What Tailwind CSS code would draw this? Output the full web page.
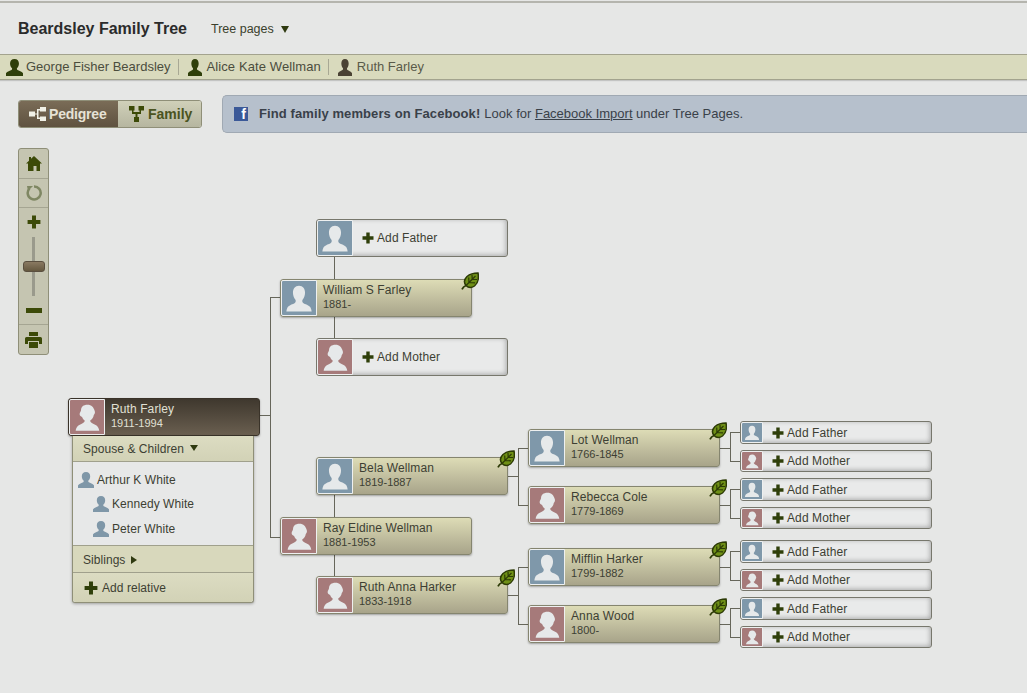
<!DOCTYPE html>
<html lang="en">
<head>
  <meta charset="UTF-8" />
  <title>Beardsley Family Tree</title>
  <script src="https://cdn.jsdelivr.net/npm/@tailwindcss/browser@4"></script>
</head>
<body class="bg-[#e6e7e6] text-[#333] font-['Liberation_Sans',Arial,sans-serif] w-[1027px] h-[693px] overflow-hidden relative">

  <svg class="hidden">
    <symbol id="person" viewBox="0 0 36 36">
      <path d="M18 5c-4.200 0-6.400 3.100-6.400 7.300 0 3 1 5.700 2.600 7.500.6 1 .4 2.700-.6 3.400-1.800 1.300-6.400 2.300-7.800 4.800-.7 1.400-1 2.800-1.200 4.200h26.800c-.2-1.400-.5-2.800-1.200-4.200-1.400-2.500-6-3.500-7.800-4.800-1-.7-1.200-2.400-.6-3.400 1.600-1.800 2.600-4.500 2.600-7.500C24.400 8.100 22.200 5 18 5z" />
    </symbol>
    <symbol id="bust" viewBox="5 4 26 29" preserveAspectRatio="none">
      <path d="M18 4c-4.500 0-6.800 3.300-6.800 7.500 0 3.200 1 6 2.800 8 .6 1 .4 2.500-.6 3.300-1.800 1.300-6.900 2.600-8.200 5.200-.8 1.500-1 3-1.200 5h28c-.2-2-.4-3.500-1.200-5-1.300-2.600-6.400-3.900-8.200-5.200-1-.8-1.200-2.300-.6-3.300 1.800-2 2.800-4.800 2.800-8C24.800 7.300 22.500 4 18 4z" />
    </symbol>
    <symbol id="woman" viewBox="0 0 36 36">
      <path d="M18.500 5c-4.400 0-6.800 2.400-6.800 5.500 0 1.500-1.500 2.800-1.500 4.500 0 1.500 1.400 2.200 2.600 3 .7 1.900 1.800 3 2.800 3.700 0 1.800-1.600 2.700-3.600 3.600-3 1.100-5.500 2.900-6 7.200h25c-.5-4.300-3-6.100-6-7.200-2-.9-3.600-1.800-3.600-3.600 2-1.300 3.400-3.300 3.800-5.900 1.200-1 1.600-2.500.9-4.300C25 7.600 22.900 5 18.500 5z" />
    </symbol>
    <symbol id="plus" viewBox="0 0 12 12">
      <path d="M4.300 .5h3.400v3.800h3.800v3.400H7.700v3.800H4.300V7.700H.5V4.300h3.800z" />
    </symbol>
    <symbol id="leaf" viewBox="0 0 18 18">
      <path fill="#6f9016" stroke="#2c3a05" stroke-width="1.500" d="M17 1C18 6 17 11 13.500 14 10.500 16 7 15.500 5 13.500 3 11 3 7.500 6 4.500 9 2 13 1 17 1z" />
      <path fill="none" stroke="#2c3a05" stroke-width="1.800" d="M1 17.300c.8-1.800 2.400-3.200 4-3.800" />
      <path fill="none" stroke="#2c3a05" stroke-width="1.200" d="M5 13.500 14.500 4M8 10.500 7.700 5.500M8 10.500l6 .3M11.200 7.300 11 3M11.200 7.300l4.800 .2" />
    </symbol>
  </svg>

  <div class="h-[2px] mt-[1px] mb-[1px] bg-[#b5b5ae]"></div>

  <!-- Title row -->
  <div class="flex items-center h-[50px] pl-[18px]">
    <h1 class="text-[16px] font-bold text-[#2b2b2b]">Beardsley Family Tree</h1>
    <button class="ml-[24px] text-[12.500px] text-[#3a3f2c] flex items-center gap-[7px] mt-[1px]">
      Tree pages
      <span class="w-0 h-0 border-x-[4px] border-x-transparent border-t-[7px] border-t-[#2f3a10]"></span>
    </button>
  </div>

  <!-- Breadcrumb -->
  <div class="h-[26px] bg-[#d9dabd] border-y border-[#a3a38e] flex items-center pl-[6px] text-[13px] text-[#4b4d3d] shadow-[0_1px_1px_rgba(0,0,0,0.15)]">
    <svg class="w-[17px] h-[17px] fill-[#2f3f0a] mr-[3px]"><use href="#bust" /></svg>
    <span>George Fisher Beardsley</span>
    <span class="w-px h-[16px] bg-[#a8a894] ml-[7px] mr-[9px]"></span>
    <svg class="w-[14px] h-[17px] fill-[#2f3f0a] mr-[5px]"><use href="#bust" /></svg>
    <span class="tracking-[0.1px]">Alice Kate Wellman</span>
    <span class="w-px h-[16px] bg-[#a8a894] ml-[7px] mr-[9px]"></span>
    <svg class="w-[14px] h-[17px] fill-[#4a4234] mr-[5px]"><use href="#bust" /></svg>
    <span class="text-[#5a5a4a]">Ruth Farley</span>
  </div>

  <!-- Toolbar -->
  <div class="flex items-start pl-[18px] mt-[15px]">
    <div class="flex h-[28px] mt-[5px] w-[184px] rounded-[3px] border border-[#8f8f78] overflow-hidden text-[14px] font-bold">
      <div class="w-[99px] flex items-center pl-[10px] gap-[2px] text-[#e6e2d6] bg-gradient-to-b from-[#7a6c57] to-[#5f5240]">
        <svg class="w-[18px] h-[14px] fill-[#f0f0e6]" viewBox="0 0 18 14"><path d="M0 4.500h6v5H0zM6 6.500h2V2h3v1.500H9.500v7H11V12H8V7.500H6zM11 0h6v4.500h-6zM11 9.500h6V14h-6z" /></svg>
        <span class="tracking-[-0.2px]">Pedigree</span>
      </div>
      <div class="flex-1 flex items-center pl-[11px] gap-[4px] text-[#4a5320] bg-gradient-to-b from-[#d0d0b9] to-[#b6b6a0]">
        <svg class="w-[15px] h-[16px] fill-[#3c4a08]" viewBox="0 0 15 16"><path d="M0 0h5.500v4.500H4.500V6H10.500V4.500H9.500V0H15v4.500h-3V8H8.500v3H10v5H5v-5h1.500V8H3V4.500H0z" /></svg>
        <span>Family</span>
      </div>
    </div>
    <div class="ml-[20px] w-[805px] h-[38px] rounded-l-[5px] bg-[#b6c0cc] border border-r-0 border-[#a0a9b3] flex items-center pl-[11px] text-[13px] text-[#3a4149]">
      <span class="w-[14px] h-[14px] bg-[#3b5998] text-white mr-[11px] shrink-0 flex justify-end pr-[2px] font-bold text-[14px] leading-[15px]">f</span>
      <b class="tracking-[0.1px] mr-[4px]">Find family members on Facebook!</b>
      Look for&nbsp;<u>Facebook Import</u>&nbsp;under Tree Pages.
    </div>
  </div>

  <!-- Zoom control -->
  <div class="absolute left-[18px] top-[148px] w-[31px] h-[207px] rounded-[3px] border border-[#8f8f78] bg-[#c5c5b1] flex flex-col items-center">
    <div class="h-[30px] w-full border-b border-[#a5a592] flex items-center justify-center">
      <svg class="w-[16px] h-[15px] fill-[#3c4a08]" viewBox="0 0 16 15"><path d="M8 0l8 7.500h-2V15h-3.500v-5h-3v5H2V7.500H0l3-2.800V1h2v1.800z" /></svg>
    </div>
    <div class="h-[29px] w-full border-b border-[#a5a592] flex items-center justify-center">
      <svg class="w-[16px] h-[16px] fill-none stroke-[#7f8763] stroke-[2.500]" viewBox="0 0 16 16"><path d="M3.500 3.500A6.500 6.500 0 1 0 8 1.500" /><path class="fill-[#7f8763] stroke-none" d="M1 1l6 0-5 5z" /></svg>
    </div>
    <div class="flex-1 w-full relative flex flex-col items-center pt-[7px]">
      <svg class="w-[14px] h-[14px] fill-[#3c4a08]"><use href="#plus" /></svg>
      <div class="w-[3px] h-[59px] bg-[#9a9a8c] mt-[8px]"></div>
      <div class="absolute left-[4px] top-[53px] w-[22px] h-[11px] rounded-[3px] border border-[#5a4f3f] bg-gradient-to-b from-[#8a7a62] to-[#65583f]"></div>
      <div class="w-[16px] h-[5px] bg-[#3c4a08] mt-[12px]"></div>
    </div>
    <div class="h-[30px] w-full border-t border-[#a5a592] flex items-center justify-center">
      <svg class="w-[17px] h-[16px] fill-[#3c4a08]" viewBox="0 0 17 16"><path d="M4 0h9v4H4zM1.500 5h14A1.500 1.500 0 0 1 17 6.500V12h-3V9H3v3H0V6.500A1.500 1.500 0 0 1 1.500 5zM4 10h9v6H4z" /></svg>
    </div>
  </div>

  <!-- Connectors -->
  <svg class="absolute left-0 top-0 w-[1027px] h-[693px]" fill="none" stroke="#66665a" stroke-width="1" shape-rendering="crispEdges">
    <path id="lines" d="M334.500 257V338M334.500 495V576M260 415.500H270.500M280 297.500H270.500V537.500H280" />
  </svg>

  <!-- Tree nodes -->
  <div id="tree"></div>

  <!-- Relatives panel under the root person -->
  <div class="absolute left-[72px] top-[436px] w-[182px] h-[167px] border border-t-0 border-[#8f8f78] rounded-b-[3px] bg-[#e7e8e8] text-[12px] tracking-[0.05px] text-[#3d3f33] shadow-[0_1px_3px_rgba(0,0,0,0.3)]">
    <div class="h-[26px] bg-gradient-to-b from-[#dcdcc2] to-[#d2d2b6] border-b border-[#a0a08c] flex items-center pl-[10px] gap-[6px]">
      Spouse &amp; Children
      <span class="w-0 h-0 border-x-[4px] border-x-transparent border-t-[6px] border-t-[#2f3a10] mb-[2px]"></span>
    </div>
    <div class="h-[83px] pt-[5px]">
      <div class="h-[25px] flex items-center pl-[5px]">
        <svg class="w-[16px] h-[16px] fill-[#7f97a8] mr-[3px]"><use href="#bust" /></svg>Arthur K White
      </div>
      <div class="h-[24px] flex items-center pl-[20px]">
        <svg class="w-[16px] h-[16px] fill-[#7f97a8] mr-[3px]"><use href="#bust" /></svg>Kennedy White
      </div>
      <div class="h-[25px] flex items-center pl-[20px]">
        <svg class="w-[16px] h-[16px] fill-[#7f97a8] mr-[3px]"><use href="#bust" /></svg>Peter White
      </div>
    </div>
    <div class="h-[28px] pt-[1px] bg-[#d8d8bc] border-y border-[#a0a08c] flex items-center pl-[10px] gap-[6px]">
      Siblings
      <span class="w-0 h-0 border-y-[4px] border-y-transparent border-l-[6px] border-l-[#2f3a10]"></span>
    </div>
    <div class="h-[29px] bg-gradient-to-b from-[#dcdcc2] to-[#d2d2b6] flex items-center pl-[11px] rounded-b-[3px]">
      <svg class="w-[14px] h-[14px] fill-[#2f3f0a] mr-[4px]"><use href="#plus" /></svg>Add relative
    </div>
  </div>

  <script>
    const M = "m", F = "f";

    // x, y, sex, name, years, hasLeaf
    const people = [
      [280, 279, M, "William S Farley", "1881-", true],
      [280, 517, F, "Ray Eldine Wellman", "1881-1953", false],
      [316, 457, M, "Bela Wellman", "1819-1887", true],
      [316, 576, F, "Ruth Anna Harker", "1833-1918", true],
      [528, 429, M, "Lot Wellman", "1766-1845", true],
      [528, 486, F, "Rebecca Cole", "1779-1869", true],
      [528, 548, M, "Mifflin Harker", "1799-1882", true],
      [528, 605, F, "Anna Wood", "1800-", true],
    ];

    const smallY = [421, 450, 478, 507, 540, 569, 597, 626];

    function photo(sex, size) {
      const bg = sex === M ? "bg-[#7f98aa]" : "bg-[#a67a7a]";
      const symbol = sex === M ? "#person" : "#woman";
      return `<div class="${bg} border border-[#eef0f0] shrink-0 flex items-end justify-center rounded-l-[2px] ${size}">
        <svg class="fill-[#e6e9ea] w-full h-full"><use href="${symbol}" /></svg>
      </div>`;
    }

    function place(el, x, y) {
      el.style.left = x + "px";
      el.style.top = y + "px";
      document.getElementById("tree").appendChild(el);
    }

    function addPerson([x, y, sex, name, years, leaf], dark) {
      const div = document.createElement("div");
      const skin = dark
        ? "border-[#3a3329] from-[#3f382e] to-[#6a5f50] text-[#e0e0d4]"
        : "border-[#85856f] from-[#dddcb6] to-[#a8a48a] text-[#3d3f33]";
      div.className = `absolute w-[192px] h-[38px] rounded-[3px] border bg-gradient-to-b flex shadow-[0_1px_2px_rgba(0,0,0,0.3)] ${skin}`;
      div.innerHTML = `
        ${photo(sex, "w-[36px] h-[36px]")}
        <div class="pl-[6px] pt-[3px] text-[12px] tracking-[0.1px] leading-[14px]">
          <div>${name}</div>
          <div class="text-[11px] tracking-normal leading-[15px]">${years}</div>
        </div>
        ${leaf ? `<svg class="absolute right-[-8px] top-[-8px] w-[18px] h-[18px]"><use href="#leaf" /></svg>` : ""}
      `;
      place(div, x, y);
    }

    function addEmpty(x, y, sex, small) {
      const div = document.createElement("div");
      const label = sex === M ? "Add Father" : "Add Mother";
      // mothers' small boxes are a pixel shorter than fathers'
      const size = small ? (sex === M ? "h-[23px]" : "h-[22px]") : "h-[38px]";
      const photoSize = small ? "w-[22px] h-full" : "w-[36px] h-[36px]";
      div.className = `absolute w-[192px] ${size} rounded-[3px] border border-[#77776c] bg-[#e9eaea] flex items-center text-[12px] tracking-[0.1px] text-[#3d3f33] shadow-[inset_-1px_-1px_5px_rgba(0,0,0,0.28)]`;
      div.innerHTML = `
        ${photo(sex, photoSize)}
        <svg class="w-[12px] h-[12px] fill-[#2f3f0a] mr-[3px] ml-[9px]"><use href="#plus" /></svg>${label}
      `;
      place(div, x, y);
    }

    addEmpty(316, 219, M, false);
    addEmpty(316, 338, F, false);

    let d = document.getElementById("lines").getAttribute("d");
    people.forEach(p => {
      addPerson(p, false);
      const [x, y] = p;
      const mid = y + 19;
      if (x === 316) {
        d += `M508 ${mid}.5H518.5M528 ${mid - 28}.5H518.5V${mid + 29}.5H528`;
      }
      if (x === 528) {
        d += `M720 ${mid}.5H730.5M740 ${mid - 16}.5H730.5V${mid + 13}.5H740`;
      }
    });
    document.getElementById("lines").setAttribute("d", d);

    smallY.forEach((y, i) => addEmpty(740, y, i % 2 ? F : M, true));

    addPerson([68, 398, F, "Ruth Farley", "1911-1994", false], true);
  </script>
</body>
</html>
